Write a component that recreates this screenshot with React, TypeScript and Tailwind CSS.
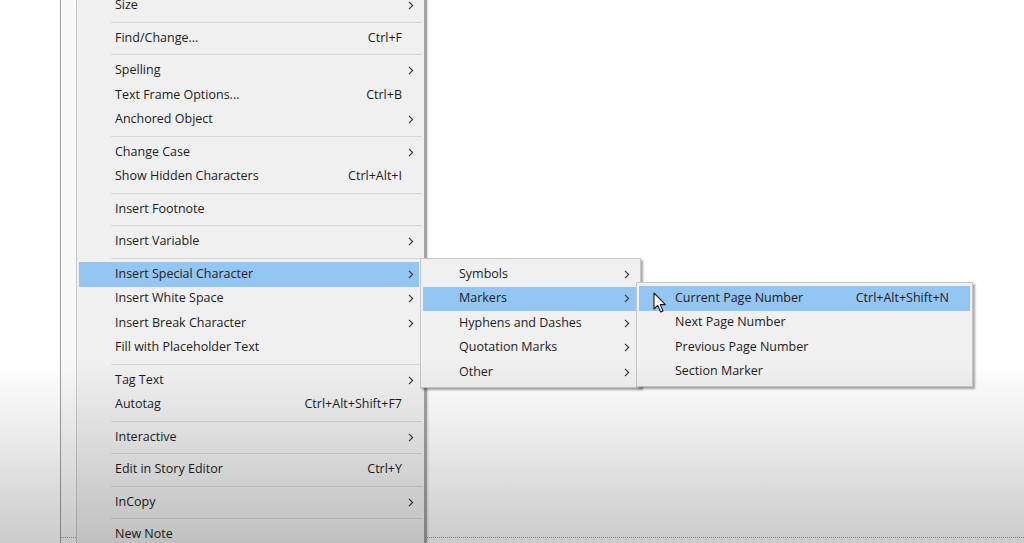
import React from "react";

type Entry =
  | { kind: "item"; label: string; shortcut?: string; sub?: boolean; active?: boolean }
  | { kind: "sep" };

const mainMenu: Entry[] = [
  { kind: "item", label: "Size", sub: true },
  { kind: "sep" },
  { kind: "item", label: "Find/Change...", shortcut: "Ctrl+F" },
  { kind: "sep" },
  { kind: "item", label: "Spelling", sub: true },
  { kind: "item", label: "Text Frame Options...", shortcut: "Ctrl+B" },
  { kind: "item", label: "Anchored Object", sub: true },
  { kind: "sep" },
  { kind: "item", label: "Change Case", sub: true },
  { kind: "item", label: "Show Hidden Characters", shortcut: "Ctrl+Alt+I" },
  { kind: "sep" },
  { kind: "item", label: "Insert Footnote" },
  { kind: "sep" },
  { kind: "item", label: "Insert Variable", sub: true },
  { kind: "sep" },
  { kind: "item", label: "Insert Special Character", sub: true, active: true },
  { kind: "item", label: "Insert White Space", sub: true },
  { kind: "item", label: "Insert Break Character", sub: true },
  { kind: "item", label: "Fill with Placeholder Text" },
  { kind: "sep" },
  { kind: "item", label: "Tag Text", sub: true },
  { kind: "item", label: "Autotag", shortcut: "Ctrl+Alt+Shift+F7" },
  { kind: "sep" },
  { kind: "item", label: "Interactive", sub: true },
  { kind: "sep" },
  { kind: "item", label: "Edit in Story Editor", shortcut: "Ctrl+Y" },
  { kind: "sep" },
  { kind: "item", label: "InCopy", sub: true },
  { kind: "sep" },
  { kind: "item", label: "New Note" },
];

const specialChars = [
  { label: "Symbols" },
  { label: "Markers", active: true },
  { label: "Hyphens and Dashes" },
  { label: "Quotation Marks" },
  { label: "Other" },
];

const markers = [
  { label: "Current Page Number", shortcut: "Ctrl+Alt+Shift+N", active: true },
  { label: "Next Page Number" },
  { label: "Previous Page Number" },
  { label: "Section Marker" },
];

function Chevron() {
  return (
    <svg width="6" height="9" viewBox="0 0 6 9" className="inline-block">
      <path d="M1 0.8 L4.6 4.5 L1 8.2" fill="none" stroke="#3a3a3a" strokeWidth="1.2" />
    </svg>
  );
}

function Cursor() {
  return (
    <svg width="14" height="22" viewBox="0 0 14 22">
      <path
        d="M1 1 L1 17 L4.8 13.4 L7.6 20 L10 19 L7.3 12.6 L12.4 12.6 Z"
        fill="#ffffff"
        stroke="#1a1a1a"
        strokeWidth="1.1"
        strokeLinejoin="round"
      />
    </svg>
  );
}

export default function App() {
  return (
    <div
      className="relative h-[543px] w-[1024px] overflow-hidden bg-white text-[12.5px] text-[#1c1c1c]"
      style={{ fontFamily: '"Open Sans", "Noto Sans", sans-serif' }}
    >
      <div className="flex h-full">
        {/* pasteboard left of the page */}
        <div className="w-[60px] shrink-0" />

        {/* page edge strip */}
        <div className="flex w-[17px] shrink-0 flex-col border-l border-r border-l-[#9d9d9d] border-r-[#cbcbcb] bg-[#f8f8f8]">
          <div className="flex-1" />
          <div className="h-[6px] border-t border-dotted border-[#9a9a9a]" />
        </div>

        {/* main context menu */}
        <div className="w-[350px] shrink-0 border-r-[3px] border-[#a2a2a2] bg-[#f0f0f0] shadow-[1px_0_2px_rgba(0,0,0,0.15)]">
          <div className="-mt-[6.5px]">
            {mainMenu.map((e, i) =>
              e.kind === "sep" ? (
                <div key={i} className="flex h-[8px] items-center pl-[34px] pr-[2px]">
                  <div className="h-px w-full bg-[#d6d6d6]" />
                </div>
              ) : (
                <div
                  key={i}
                  className={`mx-[2px] mr-[5px] flex h-[24.5px] items-center pl-[36px] ${
                    e.active ? "bg-[#93c6f2]" : ""
                  }`}
                >
                  <span className="flex-1 whitespace-nowrap">{e.label}</span>
                  {e.shortcut && <span className="whitespace-nowrap">{e.shortcut}</span>}
                  <span className="flex w-[17px] justify-center">{e.sub && <Chevron />}</span>
                </div>
              )
            )}
          </div>
        </div>

        {/* page area */}
        <div className="flex flex-1 flex-col">
          <div className="flex-1" />
          <div className="h-[6px] border-t border-dotted border-[#9a9a9a]" />
        </div>
      </div>

      {/* Insert Special Character submenu */}
      <div className="absolute left-[420px] top-[258px] w-[221px] border border-[#c6c6c6] bg-[#f0f0f0] pb-[2px] pt-[3px] shadow-[2px_2px_2px_rgba(0,0,0,0.35)]">
        {specialChars.map((s) => (
          <div
            key={s.label}
            className={`mx-[2px] flex h-[24.5px] items-center pl-[36px] ${s.active ? "bg-[#93c6f2]" : ""}`}
          >
            <span className="flex-1 whitespace-nowrap">{s.label}</span>
            <span className="flex w-[22px] justify-center">
              <Chevron />
            </span>
          </div>
        ))}
      </div>

      {/* Markers submenu */}
      <div className="absolute left-[636px] top-[282px] w-[337px] border border-[#c6c6c6] bg-[#f0f0f0] pb-[2px] pt-[3px] shadow-[2px_2px_2px_rgba(0,0,0,0.35)]">
        {markers.map((m) => (
          <div
            key={m.label}
            className={`mx-[2px] flex h-[24.5px] items-center pl-[36px] pr-[21px] ${
              m.active ? "bg-[#93c6f2]" : ""
            }`}
          >
            <span className="flex-1 whitespace-nowrap">{m.label}</span>
            {m.shortcut && <span className="whitespace-nowrap">{m.shortcut}</span>}
          </div>
        ))}
      </div>

      {/* mouse pointer */}
      <div className="pointer-events-none absolute left-[653px] top-[292px]">
        <Cursor />
      </div>

      {/* video vignette at the bottom */}
      <div className="pointer-events-none absolute inset-x-0 bottom-0 h-[180px] bg-gradient-to-b from-transparent to-black/[0.2]" />
    </div>
  );
}
